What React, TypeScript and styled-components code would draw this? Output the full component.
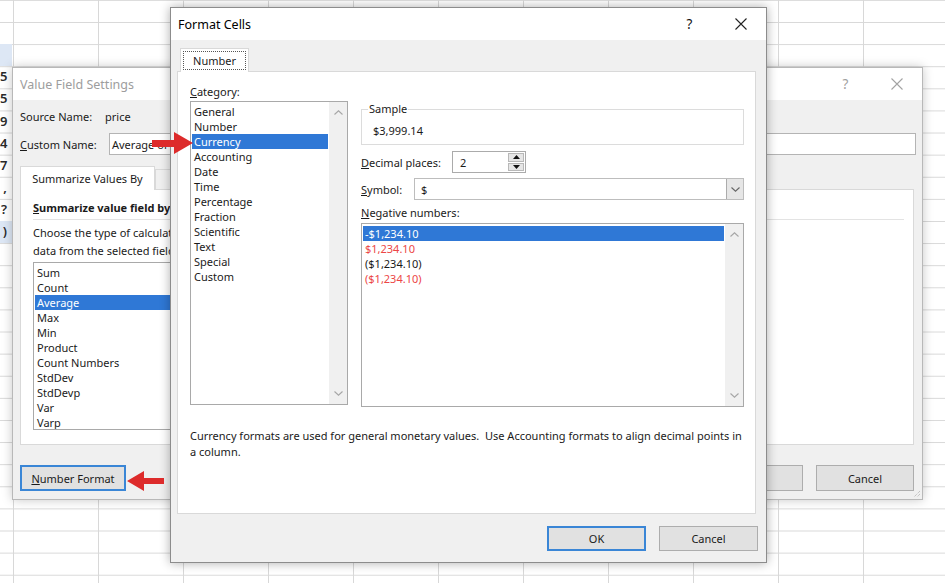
import React from "react";
import styled, { createGlobalStyle } from "styled-components";

const GlobalStyle = createGlobalStyle`
  html, body {
    margin: 0;
    padding: 0;
  }
  body {
    width: 945px;
    height: 583px;
    overflow: hidden;
    font-family: "Noto Sans", "DejaVu Sans", sans-serif;
    font-size: 11px;
    color: #1a1a1a;
  }
`;

// spreadsheet behind the dialogs
const Sheet = styled.div`
  position: relative;
  width: 945px;
  height: 583px;
  overflow: hidden;
  background-color: #fff;
  background-image: linear-gradient(to right, #d8d8d8 1px, transparent 1px),
    linear-gradient(to bottom, #d8d8d8 1px, transparent 1px);
  background-size: 85px 100%, 100% 22.12px;
  background-position: 13px 0, 0 22px;
`;

const EdgeColumn = styled.div`
  width: 12px;
  overflow: hidden;
  display: flex;
  flex-direction: column;
`;

const EdgeCell = styled.div<{ $tint?: boolean }>`
  height: 22.12px;
  line-height: 20px;
  flex: none;
  text-align: right;
  padding-right: 5px;
  font-size: 13px;
  font-weight: 600;
  color: #2a2a2a;
  background: ${(p) => (p.$tint ? "#dde7f5" : "transparent")};
`;

// dialog windows
const Window = styled.div<{ $x: number; $y: number; $w: number; $h: number; $active?: boolean }>`
  position: absolute;
  left: ${(p) => p.$x}px;
  top: ${(p) => p.$y}px;
  width: ${(p) => p.$w}px;
  height: ${(p) => p.$h}px;
  box-sizing: border-box;
  display: flex;
  flex-direction: column;
  background: #f0f0f0;
  border: 1px solid ${(p) => (p.$active ? "#8c8c8c" : "#b8b8b8")};
  box-shadow: 0 0 10px rgba(0, 0, 0, ${(p) => (p.$active ? 0.32 : 0.22)});
`;

const TitleBar = styled.div`
  height: 32px;
  flex: none;
  display: flex;
  align-items: center;
  background: #fff;
  padding-left: 7px;
`;

const TitleText = styled.div<{ $dim?: boolean }>`
  flex: 1;
  font-size: 12.5px;
  color: ${(p) => (p.$dim ? "#9d9d9d" : "#000")};
`;

const TitleButton = styled.div`
  width: 51px;
  height: 32px;
  display: flex;
  align-items: center;
  justify-content: center;
`;

const HelpMark = styled.span<{ $dim?: boolean }>`
  font-size: 13.5px;
  color: ${(p) => (p.$dim ? "#a0a0a0" : "#111")};
`;

const CloseIcon = ({ color }: { color: string }) => (
  <svg width="12" height="12" viewBox="0 0 12 12">
    <path d="M0.5 0.5 L11.5 11.5 M11.5 0.5 L0.5 11.5" stroke={color} strokeWidth="1.1" fill="none" />
  </svg>
);

const SettingsBody = styled.div`
  flex: 1;
  display: flex;
  flex-direction: column;
  padding: 8px 8px 7px 7px;
`;

const FormatBody = styled.div`
  flex: 1;
  display: flex;
  flex-direction: column;
  padding: 8px 8px 9px 6px;
`;

const InfoRow = styled.div<{ $gap?: number }>`
  display: flex;
  align-items: center;
  min-height: 16px;
  margin-top: ${(p) => p.$gap ?? 0}px;
  white-space: nowrap;
`;

const Label = styled.span<{ $w: number }>`
  width: ${(p) => p.$w}px;
  flex: none;
`;

const TextField = styled.div`
  flex: 1;
  height: 22px;
  box-sizing: border-box;
  margin-right: -2px;
  border: 1px solid #b4b4b4;
  background: #fff;
  display: flex;
  align-items: center;
  padding-left: 2px;
`;

const TabStrip = styled.div<{ $gap?: number; $indent?: number }>`
  display: flex;
  align-items: flex-end;
  margin-top: ${(p) => p.$gap ?? 0}px;
  padding-left: ${(p) => p.$indent ?? 0}px;
`;

const Tab = styled.div<{ $active?: boolean; $w?: number }>`
  position: relative;
  z-index: ${(p) => (p.$active ? 1 : 0)};
  box-sizing: border-box;
  width: ${(p) => (p.$w ? `${p.$w}px` : "auto")};
  height: ${(p) => (p.$active ? 24 : 21)}px;
  margin-bottom: -1px;
  display: flex;
  align-items: center;
  justify-content: center;
  padding: 2px;
  background: ${(p) => (p.$active ? "#fff" : "#f0f0f0")};
  border: 1px solid #d9d9d9;
  border-bottom: ${(p) => (p.$active ? "none" : "1px solid #d9d9d9")};
  white-space: nowrap;
`;

const FocusLabel = styled.span`
  align-self: stretch;
  flex: 1;
  display: flex;
  align-items: center;
  justify-content: center;
  border: 1px dotted #555;
`;

const TabPanel = styled.div<{ $h: number }>`
  height: ${(p) => p.$h}px;
  box-sizing: border-box;
  flex: none;
  background: #fff;
  border: 1px solid #d9d9d9;
  display: flex;
  flex-direction: column;
`;

const SettingsPanel = styled(TabPanel)`
  padding: 10px 9px 0 12px;
  overflow: hidden;
`;

const FormatPanel = styled(TabPanel)`
  margin-right: 2px;
  padding: 12px 10px 0 12px;
`;

const Heading = styled.div`
  font-weight: 700;
  line-height: 16px;
`;

const Rule = styled.div`
  height: 1px;
  margin-top: 3px;
  background: #e3e3e3;
`;

const Hint = styled.div`
  margin-top: 4px;
  line-height: 18px;
  white-space: nowrap;
`;

const ListBox = styled.div<{ $w?: number; $h: number; $top?: number }>`
  box-sizing: border-box;
  width: ${(p) => (p.$w ? `${p.$w}px` : "100%")};
  height: ${(p) => p.$h}px;
  margin-top: ${(p) => p.$top ?? 0}px;
  flex: none;
  border: 1px solid #a9a9a9;
  background: #fff;
  display: flex;
  overflow: hidden;
`;

const ListItems = styled.div`
  flex: 1;
  padding: 2px 1px 0 1px;
  display: flex;
  flex-direction: column;
`;

const ListItem = styled.div<{ $selected?: boolean; $red?: boolean }>`
  height: 15px;
  line-height: 15px;
  flex: none;
  overflow: hidden;
  padding-left: 2px;
  white-space: nowrap;
  background: ${(p) => (p.$selected ? "#2f78d6" : "transparent")};
  color: ${(p) => (p.$selected ? "#fff" : p.$red ? "#ec4646" : "#1a1a1a")};
`;

const ScrollTrack = styled.div`
  width: 18px;
  flex: none;
  background: #f0f0f0;
  display: flex;
  flex-direction: column;
  justify-content: space-between;
  align-items: center;
  padding: 8px 0 8px;
`;

const Chevron = ({ up, color = "#a6a6a6" }: { up?: boolean; color?: string }) => (
  <svg width="9" height="5" viewBox="0 0 9 5">
    <polyline
      points={up ? "0.5,4.5 4.5,0.8 8.5,4.5" : "0.5,0.5 4.5,4.2 8.5,0.5"}
      stroke={color}
      strokeWidth="1.1"
      fill="none"
    />
  </svg>
);

const Columns = styled.div`
  display: grid;
  grid-template-columns: 158px 383px;
  column-gap: 13px;
`;

const Column = styled.div`
  display: flex;
  flex-direction: column;
`;

const FieldLabel = styled.div<{ $top?: number }>`
  line-height: 15px;
  margin-top: ${(p) => p.$top ?? 0}px;
`;

const SampleGroup = styled.fieldset`
  margin: 17px 0 0 0;
  padding: 0 6px 5px 6px;
  border: 1px solid #dcdcdc;
  min-width: 0;
`;

const SampleLegend = styled.legend`
  padding: 0 1px;
  line-height: 16px;
`;

const SampleValue = styled.div`
  margin: 6px 0 0 5px;
  line-height: 16px;
`;

const ControlRow = styled.div<{ $top: number }>`
  display: flex;
  align-items: center;
  height: 22px;
  margin-top: ${(p) => p.$top}px;
`;

const SpinBox = styled.div`
  width: 74px;
  height: 22px;
  box-sizing: border-box;
  border: 1px solid #ababab;
  background: #fff;
  display: flex;
  align-items: center;
  padding-left: 7px;
`;

const Grow = styled.span`
  flex: 1;
`;

const SpinButtons = styled.div`
  width: 16px;
  align-self: stretch;
  display: flex;
  flex-direction: column;
  gap: 1px;
  margin: 1px 1px 1px 0;
`;

const SpinButton = styled.div`
  flex: 1;
  box-sizing: border-box;
  background: #e6e6e6;
  border: 1px solid #b8b8b8;
  display: flex;
  align-items: center;
  justify-content: center;
`;

const Triangle = ({ up }: { up?: boolean }) => (
  <svg width="7" height="4" viewBox="0 0 7 4">
    <polygon points={up ? "0,4 3.5,0 7,4" : "0,0 7,0 3.5,4"} fill="#111" />
  </svg>
);

const SelectBox = styled.div`
  flex: 1;
  height: 22px;
  box-sizing: border-box;
  border: 1px solid #bdbdbd;
  background: #fff;
  display: flex;
  align-items: center;
  padding-left: 6px;
`;

const SelectArrow = styled.div`
  width: 17px;
  align-self: stretch;
  box-sizing: border-box;
  background: #e6e6e6;
  border-left: 1px solid #acacac;
  display: flex;
  align-items: center;
  justify-content: center;
`;

const Description = styled.div`
  margin-top: 21px;
  line-height: 16px;
  white-space: nowrap;
`;

const ButtonRow = styled.div<{ $top: number; $end?: boolean }>`
  display: flex;
  align-items: center;
  justify-content: ${(p) => (p.$end ? "flex-end" : "space-between")};
  gap: 13px;
  margin-top: ${(p) => p.$top}px;
`;

const ButtonGroup = styled.div`
  display: flex;
  gap: 13px;
`;

const Button = styled.div<{ $w: number; $h: number; $focused?: boolean }>`
  box-sizing: border-box;
  width: ${(p) => p.$w}px;
  height: ${(p) => p.$h}px;
  display: flex;
  align-items: center;
  justify-content: center;
  background: #e1e1e1;
  border: ${(p) => (p.$focused ? "2px solid #3a86d6" : "1px solid #adadad")};
`;

const Grip = styled.svg`
  position: absolute;
  right: 1px;
  bottom: 1px;
`;

const Pointer = styled.svg<{ $x: number; $y: number }>`
  position: absolute;
  left: ${(p) => p.$x}px;
  top: ${(p) => p.$y}px;
  z-index: 5;
`;

const edgeCells = [
  { text: "" },
  { text: "" },
  { text: "", tint: true },
  { text: "5" },
  { text: "5" },
  { text: "9" },
  { text: "4" },
  { text: "7" },
  { text: "," },
  { text: "?" },
  { text: ")", tint: true },
];

const summaryItems = ["Sum", "Count", "Average", "Max", "Min", "Product", "Count Numbers", "StdDev", "StdDevp", "Var", "Varp"];

const categories = [
  "General",
  "Number",
  "Currency",
  "Accounting",
  "Date",
  "Time",
  "Percentage",
  "Fraction",
  "Scientific",
  "Text",
  "Special",
  "Custom",
];

const negatives = [
  { text: "-$1,234.10", selected: true },
  { text: "$1,234.10", red: true },
  { text: "($1,234.10)" },
  { text: "($1,234.10)", red: true },
];

export default function App() {
  return (
    <>
      <GlobalStyle />
      <Sheet>
        <EdgeColumn>
          {edgeCells.map((c, i) => (
            <EdgeCell key={i} $tint={c.tint}>
              {c.text}
            </EdgeCell>
          ))}
        </EdgeColumn>

        {/* Value Field Settings (behind) */}
        <Window $x={12} $y={67} $w={911} $h={433}>
          <TitleBar>
            <TitleText $dim>Value Field Settings</TitleText>
            <TitleButton>
              <HelpMark $dim>?</HelpMark>
            </TitleButton>
            <TitleButton>
              <CloseIcon color="#a3a3a3" />
            </TitleButton>
          </TitleBar>
          <SettingsBody>
            <InfoRow>
              <Label $w={85}>Source Name:</Label>
              <span>price</span>
            </InfoRow>
            <InfoRow $gap={9}>
              <Label $w={89}>
                <u>C</u>ustom Name:
              </Label>
              <TextField>Average of price</TextField>
            </InfoRow>
            <TabStrip $gap={11}>
              <Tab $active $w={135}>
                Summarize Values By
              </Tab>
              <Tab $w={120}>Show Values As</Tab>
            </TabStrip>
            <SettingsPanel $h={256}>
              <Heading>
                <u>S</u>ummarize value field by
              </Heading>
              <Rule />
              <Hint>
                Choose the type of calculation that you want to use to summarize
                <br />
                data from the selected field
              </Hint>
              <ListBox $w={330} $h={168} $top={2}>
                <ListItems>
                  {summaryItems.map((s) => (
                    <ListItem key={s} $selected={s === "Average"}>
                      {s}
                    </ListItem>
                  ))}
                </ListItems>
              </ListBox>
            </SettingsPanel>
            <ButtonRow $top={20}>
              <Button $w={106} $h={26} $focused>
                <span>
                  <u>N</u>umber Format
                </span>
              </Button>
              <ButtonGroup>
                <Button $w={98} $h={26}>
                  OK
                </Button>
                <Button $w={98} $h={26}>
                  Cancel
                </Button>
              </ButtonGroup>
            </ButtonRow>
          </SettingsBody>
          <Grip width="8" height="8" viewBox="0 0 8 8">
            <path d="M7 1 L1 7 M7 4 L4 7 M7 7 L7 7" stroke="#b0b0b0" strokeWidth="1" strokeDasharray="1 1" />
          </Grip>
        </Window>

        {/* Format Cells (front) */}
        <Window $x={170} $y={7} $w={597} $h={556} $active>
          <TitleBar>
            <TitleText>Format Cells</TitleText>
            <TitleButton>
              <HelpMark>?</HelpMark>
            </TitleButton>
            <TitleButton>
              <CloseIcon color="#222" />
            </TitleButton>
          </TitleBar>
          <FormatBody>
            <TabStrip $indent={3}>
              <Tab $active $w={69}>
                <FocusLabel>Number</FocusLabel>
              </Tab>
            </TabStrip>
            <FormatPanel $h={443}>
              <Columns>
                <Column>
                  <FieldLabel>
                    <u>C</u>ategory:
                  </FieldLabel>
                  <ListBox $h={304} $top={2}>
                    <ListItems>
                      {categories.map((c) => (
                        <ListItem key={c} $selected={c === "Currency"}>
                          {c}
                        </ListItem>
                      ))}
                    </ListItems>
                    <ScrollTrack>
                      <Chevron up />
                      <Chevron />
                    </ScrollTrack>
                  </ListBox>
                </Column>
                <Column>
                  <SampleGroup>
                    <SampleLegend>Sample</SampleLegend>
                    <SampleValue>$3,999.14</SampleValue>
                  </SampleGroup>
                  <ControlRow $top={6}>
                    <Label $w={91}>
                      <u>D</u>ecimal places:
                    </Label>
                    <SpinBox>
                      <Grow>2</Grow>
                      <SpinButtons>
                        <SpinButton>
                          <Triangle up />
                        </SpinButton>
                        <SpinButton>
                          <Triangle />
                        </SpinButton>
                      </SpinButtons>
                    </SpinBox>
                  </ControlRow>
                  <ControlRow $top={5}>
                    <Label $w={53}>
                      <u>S</u>ymbol:
                    </Label>
                    <SelectBox>
                      <Grow>$</Grow>
                      <SelectArrow>
                        <Chevron color="#666" />
                      </SelectArrow>
                    </SelectBox>
                  </ControlRow>
                  <FieldLabel $top={5}>
                    <u>N</u>egative numbers:
                  </FieldLabel>
                  <ListBox $h={184} $top={3}>
                    <ListItems>
                      {negatives.map((n, i) => (
                        <ListItem key={i} $selected={n.selected} $red={n.red}>
                          {n.text}
                        </ListItem>
                      ))}
                    </ListItems>
                    <ScrollTrack>
                      <Chevron up />
                      <Chevron />
                    </ScrollTrack>
                  </ListBox>
                </Column>
              </Columns>
              <Description>
                Currency formats are used for general monetary values.&nbsp; Use Accounting formats to align decimal points in
                <br />a column.
              </Description>
            </FormatPanel>
            <ButtonRow $top={12} $end>
              <Button $w={99} $h={25} $focused>
                OK
              </Button>
              <Button $w={99} $h={25}>
                Cancel
              </Button>
            </ButtonRow>
          </FormatBody>
        </Window>

        {/* red call-out arrows */}
        <Pointer $x={152} $y={132} width="41" height="22" viewBox="0 0 41 22">
          <polygon points="0,8 22,8 22,0 41,11 22,22 22,15 0,15" fill="#dd2b2b" />
        </Pointer>
        <Pointer $x={127} $y={471} width="37" height="20" viewBox="0 0 37 20">
          <polygon points="0,10 17,0 17,7 37,7 37,13 17,13 17,20" fill="#dd2b2b" />
        </Pointer>
      </Sheet>
    </>
  );
}
